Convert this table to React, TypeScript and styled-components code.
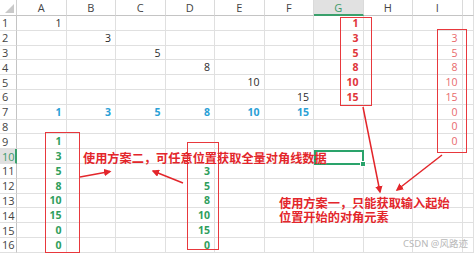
import React from "react";
import styled, { createGlobalStyle, css } from "styled-components";

type Tone = "plain" | "blue" | "red" | "pink" | "green";

type CellValue = {
  value: number;
  tone: Tone;
};

const COLUMNS = ["A", "B", "C", "D", "E", "F", "G", "H", "I", ""];
const ROW_COUNT = 16;
const SELECTED_COL = "G";
const SELECTED_ROW = 10;

const TONE_COLOR: Record<Tone, string> = {
  plain: "#2b2b2b",
  blue: "#2a9fd6",
  red: "#e0353a",
  pink: "#e8696b",
  green: "#2f9e5c",
};

const seq = [1, 3, 5, 8, 10, 15];

// key: "A1" -> value
const cells: Record<string, CellValue> = {};
seq.forEach((v, i) => {
  cells[`${COLUMNS[i]}${i + 1}`] = { value: v, tone: "plain" };
  cells[`${COLUMNS[i]}7`] = { value: v, tone: "blue" };
  cells[`G${i + 1}`] = { value: v, tone: "red" };
});
[3, 5, 8, 10, 15, 0, 0, 0].forEach((v, i) => {
  cells[`I${i + 2}`] = { value: v, tone: "pink" };
});
[1, 3, 5, 8, 10, 15, 0, 0].forEach((v, i) => {
  cells[`A${i + 9}`] = { value: v, tone: "green" };
});
[3, 5, 8, 10, 15, 0].forEach((v, i) => {
  cells[`D${i + 11}`] = { value: v, tone: "green" };
});

const GlobalStyle = createGlobalStyle`
  html, body {
    margin: 0;
    padding: 0;
    background: #ffffff;
    overflow: hidden;
  }
  body {
    font-family: "Liberation Sans", Arial, sans-serif;
  }
`;

const Page = styled.div`
  position: relative;
  width: 474px;
  height: 253px;
  overflow: hidden;
  background: #ffffff;
`;

const Sheet = styled.div`
  display: grid;
  grid-template-columns: 17px repeat(9, 49.5px) 1fr;
  grid-template-rows: 16px repeat(${ROW_COUNT}, 14.8px);
`;

const Corner = styled.div`
  position: relative;
  border-right: 1px solid #d0d0d0;
  border-bottom: 1px solid #c4c4c4;
  &::after {
    content: "";
    position: absolute;
    right: 2px;
    bottom: 2px;
    border-left: 9px solid transparent;
    border-bottom: 9px solid #c9c9c9;
  }
`;

const ColHeader = styled.div<{ $active?: boolean }>`
  display: flex;
  align-items: center;
  justify-content: center;
  font-family: "Open Sans", "Liberation Sans", sans-serif;
  font-size: 11px;
  color: #444;
  border-right: 1px solid #dadada;
  border-bottom: 1px solid #c4c4c4;
  box-sizing: border-box;
  ${(p) =>
    p.$active &&
    css`
      background: #e1e1e1;
      color: #3d9a6a;
      border-bottom: 2px solid #3aa06c;
    `}
`;

const RowHeader = styled.div<{ $active?: boolean }>`
  display: flex;
  align-items: center;
  padding-left: 2px;
  font-family: "Open Sans", "Liberation Sans", sans-serif;
  font-size: 11px;
  color: #444;
  border-right: 1px solid #c4c4c4;
  border-bottom: 1px solid #e0e0e0;
  box-sizing: border-box;
  overflow: hidden;
  ${(p) =>
    p.$active &&
    css`
      background: #e1e1e1;
      color: #3d9a6a;
      border-right: 2px solid #3aa06c;
    `}
`;

const Cell = styled.div<{ $tone: Tone }>`
  display: flex;
  align-items: center;
  justify-content: flex-end;
  padding-right: 4px;
  font-family: "Open Sans", "Liberation Sans", sans-serif;
  font-size: 10.5px;
  color: ${(p) => TONE_COLOR[p.$tone]};
  font-weight: ${(p) => (p.$tone === "plain" || p.$tone === "pink" ? 400 : 700)};
  border-right: 1px solid #e0e0e0;
  border-bottom: 1px solid #e0e0e0;
  box-sizing: border-box;
`;

const Frame = styled.div<{ $x: number; $y: number; $w: number; $h: number }>`
  position: absolute;
  left: ${(p) => p.$x}px;
  top: ${(p) => p.$y}px;
  width: ${(p) => p.$w}px;
  height: ${(p) => p.$h}px;
  border: 1.5px solid #e8383d;
  box-sizing: border-box;
  pointer-events: none;
`;

const Selection = styled.div`
  position: absolute;
  left: 314px;
  top: 150px;
  width: 50px;
  height: 15px;
  border: 2px solid #2aa36b;
  box-sizing: border-box;
  &::after {
    content: "";
    position: absolute;
    right: -4px;
    bottom: -4px;
    width: 4px;
    height: 4px;
    background: #2aa36b;
    border: 1px solid #fff;
  }
`;

const Note = styled.div<{ $x: number; $y: number }>`
  position: absolute;
  left: ${(p) => p.$x}px;
  top: ${(p) => p.$y}px;
  font-family: "Noto Sans CJK SC", sans-serif;
  font-weight: 700;
  font-size: 12.2px;
  line-height: 14px;
  color: #e3262b;
  white-space: nowrap;
`;

const Watermark = styled.div`
  position: absolute;
  left: 403px;
  top: 236px;
  font-family: "Noto Sans", "Noto Sans CJK SC", sans-serif;
  font-size: 9.5px;
  color: #b8b8b8;
  white-space: nowrap;
`;

const Arrows = styled.svg`
  position: absolute;
  left: 0;
  top: 0;
  pointer-events: none;
`;

const arrows = [
  { x1: 80, y1: 177, x2: 110, y2: 171.5 },
  { x1: 183, y1: 183, x2: 153, y2: 171 },
  { x1: 363, y1: 107, x2: 380, y2: 192 },
  { x1: 442, y1: 155, x2: 397, y2: 190 },
];

export default function App() {
  return (
    <Page>
      <GlobalStyle />
      <Sheet>
        <Corner />
        {COLUMNS.map((c, i) => (
          <ColHeader key={`h${i}`} $active={c === SELECTED_COL}>
            {c}
          </ColHeader>
        ))}
        {Array.from({ length: ROW_COUNT }, (_, r) => {
          const row = r + 1;
          return (
            <React.Fragment key={row}>
              <RowHeader $active={row === SELECTED_ROW}>{row}</RowHeader>
              {COLUMNS.map((c, i) => {
                const v = cells[`${c}${row}`];
                return (
                  <Cell key={`${row}-${i}`} $tone={v ? v.tone : "plain"}>
                    {v ? v.value : ""}
                  </Cell>
                );
              })}
            </React.Fragment>
          );
        })}
      </Sheet>

      <Selection />

      <Frame $x={340} $y={17} $w={32} $h={89} />
      <Frame $x={437} $y={29} $w={30} $h={124} />
      <Frame $x={45} $y={132} $w={35} $h={121} />
      <Frame $x={187} $y={142} $w={32} $h={108} />

      <Note $x={83} $y={151}>使用方案二，可任意位置获取全量对角线数据</Note>
      <Note $x={279} $y={196}>
        使用方案一，只能获取输入起始
        <br />
        位置开始的对角元素
      </Note>
      <Watermark>CSDN @风路迹</Watermark>

      <Arrows width={474} height={253} viewBox="0 0 474 253">
        <defs>
          <marker
            id="head"
            viewBox="0 0 10 10"
            refX="8"
            refY="5"
            markerWidth="5"
            markerHeight="5"
            orient="auto"
          >
            <path d="M0 0 L10 5 L0 10 Z" fill="#e3262b" />
          </marker>
        </defs>
        {arrows.map((a, i) => (
          <line
            key={i}
            x1={a.x1}
            y1={a.y1}
            x2={a.x2}
            y2={a.y2}
            stroke="#e3262b"
            strokeWidth={1.5}
            markerEnd="url(#head)"
          />
        ))}
      </Arrows>
    </Page>
  );
}
